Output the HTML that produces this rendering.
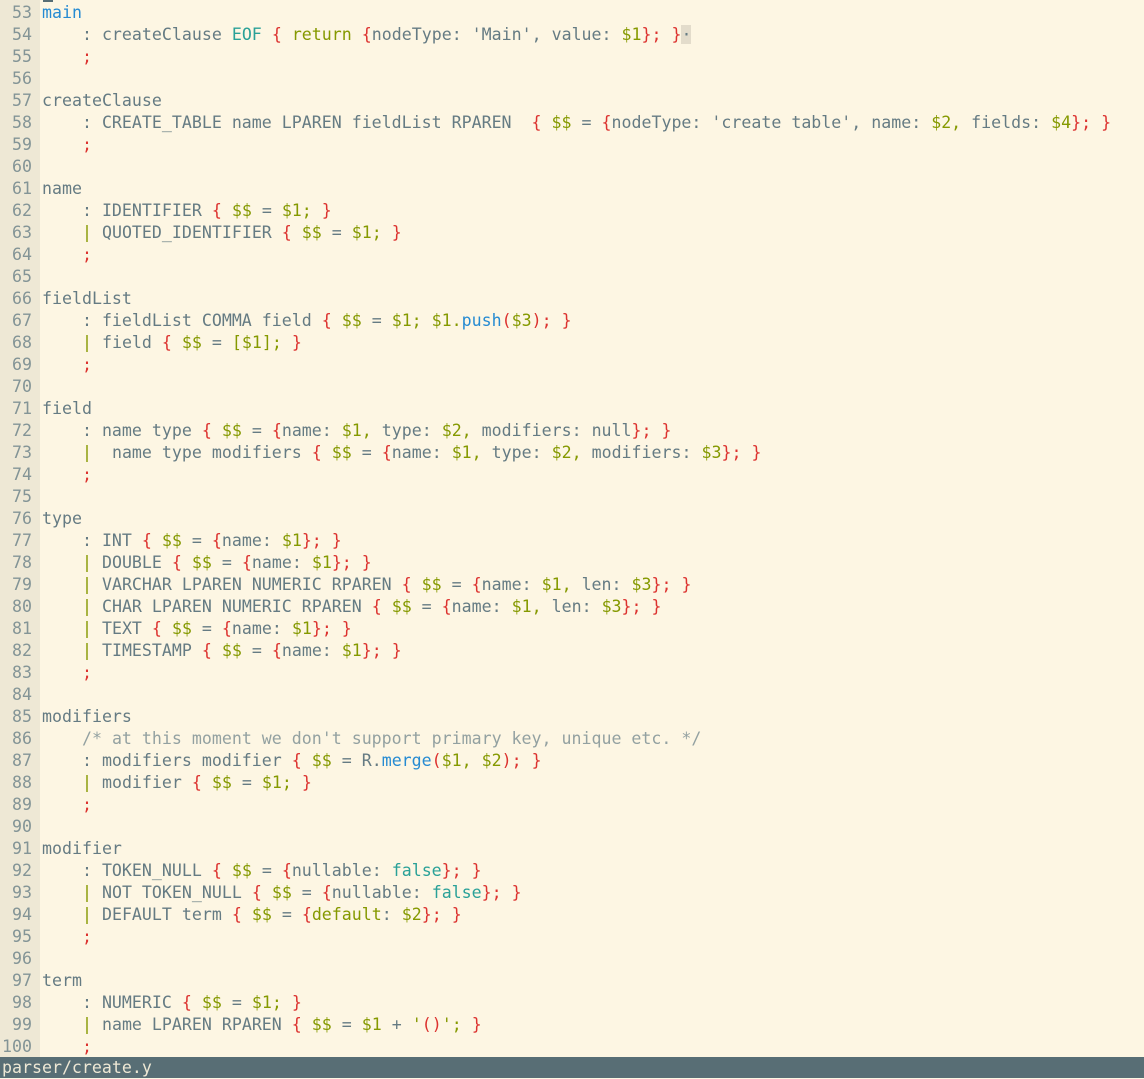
<!DOCTYPE html>
<html><head><meta charset="utf-8"><style>
html,body{margin:0;padding:0;background:#fdf6e3;width:1144px;height:1078px;overflow:hidden}
body{font-family:"DejaVu Sans Mono","Liberation Mono",monospace;font-size:16.6px;color:#657b83}
#g{position:absolute;left:0;top:0;width:40px;height:1057px;background:#eee8d5}
#c{position:absolute;left:0;top:2px}
.l{height:22px;line-height:22px;white-space:pre;position:relative}
.n{display:inline-block;width:32px;text-align:right;color:#839496;margin-right:10px}
.r{color:#dc322f}.y{color:#859900}.b{color:#268bd2}.c{color:#2aa198}.m{color:#93a1a1}
#s{position:absolute;left:0;top:1057px;width:1144px;height:21px;background:#586e75;color:#eee8d5;line-height:22px;padding-left:2px;white-space:pre}
.cur{background:#e3dccb}
#tick{position:absolute;left:43px;top:0;width:10px;height:2px;background:#586e75}
</style></head><body>
<div id="g"></div>
<div id="tick"></div>
<div id="c">
<div class="l"><span class="n">53</span><span class="b">main</span></div>
<div class="l"><span class="n">54</span>    : createClause <span class="c">EOF</span> <span class="r">{</span> <span class="y">return</span> <span class="r">{</span>nodeType: 'Main', value: <span class="y">$1</span><span class="r">}; }</span><span class="cur">·</span></div>
<div class="l"><span class="n">55</span>    <span class="r">;</span></div>
<div class="l"><span class="n">56</span></div>
<div class="l"><span class="n">57</span>createClause</div>
<div class="l"><span class="n">58</span>    : CREATE_TABLE name LPAREN fieldList RPAREN  <span class="r">{</span> <span class="y">$$</span> = <span class="r">{</span>nodeType: 'create table', name: <span class="y">$2,</span> fields: <span class="y">$4</span><span class="r">}; }</span></div>
<div class="l"><span class="n">59</span>    <span class="r">;</span></div>
<div class="l"><span class="n">60</span></div>
<div class="l"><span class="n">61</span>name</div>
<div class="l"><span class="n">62</span>    : IDENTIFIER <span class="r">{</span> <span class="y">$$</span> = <span class="y">$1;</span> <span class="r">}</span></div>
<div class="l"><span class="n">63</span>    <span class="y">|</span> QUOTED_IDENTIFIER <span class="r">{</span> <span class="y">$$</span> = <span class="y">$1;</span> <span class="r">}</span></div>
<div class="l"><span class="n">64</span>    <span class="r">;</span></div>
<div class="l"><span class="n">65</span></div>
<div class="l"><span class="n">66</span>fieldList</div>
<div class="l"><span class="n">67</span>    : fieldList COMMA field <span class="r">{</span> <span class="y">$$</span> = <span class="y">$1; $1.</span><span class="b">push</span><span class="r">(</span><span class="y">$3</span><span class="r">); }</span></div>
<div class="l"><span class="n">68</span>    <span class="y">|</span> field <span class="r">{</span> <span class="y">$$</span> = <span class="y">[$1];</span> <span class="r">}</span></div>
<div class="l"><span class="n">69</span>    <span class="r">;</span></div>
<div class="l"><span class="n">70</span></div>
<div class="l"><span class="n">71</span>field</div>
<div class="l"><span class="n">72</span>    : name type <span class="r">{</span> <span class="y">$$</span> = <span class="r">{</span>name: <span class="y">$1,</span> type: <span class="y">$2,</span> modifiers: null<span class="r">}; }</span></div>
<div class="l"><span class="n">73</span>    <span class="y">|</span>  name type modifiers <span class="r">{</span> <span class="y">$$</span> = <span class="r">{</span>name: <span class="y">$1,</span> type: <span class="y">$2,</span> modifiers: <span class="y">$3</span><span class="r">}; }</span></div>
<div class="l"><span class="n">74</span>    <span class="r">;</span></div>
<div class="l"><span class="n">75</span></div>
<div class="l"><span class="n">76</span>type</div>
<div class="l"><span class="n">77</span>    : INT <span class="r">{</span> <span class="y">$$</span> = <span class="r">{</span>name: <span class="y">$1</span><span class="r">}; }</span></div>
<div class="l"><span class="n">78</span>    <span class="y">|</span> DOUBLE <span class="r">{</span> <span class="y">$$</span> = <span class="r">{</span>name: <span class="y">$1</span><span class="r">}; }</span></div>
<div class="l"><span class="n">79</span>    <span class="y">|</span> VARCHAR LPAREN NUMERIC RPAREN <span class="r">{</span> <span class="y">$$</span> = <span class="r">{</span>name: <span class="y">$1,</span> len: <span class="y">$3</span><span class="r">}; }</span></div>
<div class="l"><span class="n">80</span>    <span class="y">|</span> CHAR LPAREN NUMERIC RPAREN <span class="r">{</span> <span class="y">$$</span> = <span class="r">{</span>name: <span class="y">$1,</span> len: <span class="y">$3</span><span class="r">}; }</span></div>
<div class="l"><span class="n">81</span>    <span class="y">|</span> TEXT <span class="r">{</span> <span class="y">$$</span> = <span class="r">{</span>name: <span class="y">$1</span><span class="r">}; }</span></div>
<div class="l"><span class="n">82</span>    <span class="y">|</span> TIMESTAMP <span class="r">{</span> <span class="y">$$</span> = <span class="r">{</span>name: <span class="y">$1</span><span class="r">}; }</span></div>
<div class="l"><span class="n">83</span>    <span class="r">;</span></div>
<div class="l"><span class="n">84</span></div>
<div class="l"><span class="n">85</span>modifiers</div>
<div class="l"><span class="n">86</span>    <span class="m">/* at this moment we don't support primary key, unique etc. */</span></div>
<div class="l"><span class="n">87</span>    : modifiers modifier <span class="r">{</span> <span class="y">$$</span> = R.<span class="b">merge</span><span class="r">(</span><span class="y">$1, $2</span><span class="r">); }</span></div>
<div class="l"><span class="n">88</span>    <span class="y">|</span> modifier <span class="r">{</span> <span class="y">$$</span> = <span class="y">$1;</span> <span class="r">}</span></div>
<div class="l"><span class="n">89</span>    <span class="r">;</span></div>
<div class="l"><span class="n">90</span></div>
<div class="l"><span class="n">91</span>modifier</div>
<div class="l"><span class="n">92</span>    : TOKEN_NULL <span class="r">{</span> <span class="y">$$</span> = <span class="r">{</span>nullable: <span class="c">false</span><span class="r">}; }</span></div>
<div class="l"><span class="n">93</span>    <span class="y">|</span> NOT TOKEN_NULL <span class="r">{</span> <span class="y">$$</span> = <span class="r">{</span>nullable: <span class="c">false</span><span class="r">}; }</span></div>
<div class="l"><span class="n">94</span>    <span class="y">|</span> DEFAULT term <span class="r">{</span> <span class="y">$$</span> = <span class="r">{</span><span class="y">default</span>: <span class="y">$2</span><span class="r">}; }</span></div>
<div class="l"><span class="n">95</span>    <span class="r">;</span></div>
<div class="l"><span class="n">96</span></div>
<div class="l"><span class="n">97</span>term</div>
<div class="l"><span class="n">98</span>    : NUMERIC <span class="r">{</span> <span class="y">$$</span> = <span class="y">$1;</span> <span class="r">}</span></div>
<div class="l"><span class="n">99</span>    <span class="y">|</span> name LPAREN RPAREN <span class="r">{</span> <span class="y">$$</span> = <span class="y">$1</span> + <span class="y">'</span><span class="r">()</span><span class="y">';</span> <span class="r">}</span></div>
<div class="l"><span class="n">100</span>    <span class="r">;</span></div>
</div>
<div id="s">parser/create.y</div>
</body></html>
